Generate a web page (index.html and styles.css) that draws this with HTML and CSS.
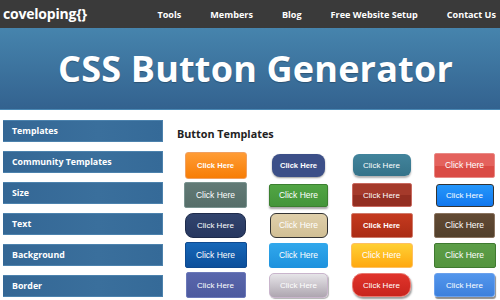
FILE: index.html
```html
<!DOCTYPE html>
<html>
<head>
<meta charset="utf-8">
<link rel="stylesheet" href="styles.css">
</head>
<body>
<nav class="topbar">
  <div class="logo">coveloping{}</div>
  <ul class="menu">
    <li>Tools</li>
    <li>Members</li>
    <li>Blog</li>
    <li>Free Website Setup</li>
    <li>Contact Us</li>
  </ul>
</nav>
<header class="hero">
  <h1>CSS Button Generator</h1>
</header>
<div class="content">
  <aside class="sidebar">
    <div class="side-item">Templates</div>
    <div class="side-item">Community Templates</div>
    <div class="side-item">Size</div>
    <div class="side-item">Text</div>
    <div class="side-item">Background</div>
    <div class="side-item">Border</div>
  </aside>
  <main class="main">
    <h2>Button Templates</h2>
    <div class="grid">
      <div class="cell"><span class="btn b1">Click Here</span></div>
      <div class="cell"><span class="btn b2">Click Here</span></div>
      <div class="cell"><span class="btn b3">Click Here</span></div>
      <div class="cell"><span class="btn b4">Click Here</span></div>
      <div class="cell"><span class="btn b5">Click Here</span></div>
      <div class="cell"><span class="btn b6">Click Here</span></div>
      <div class="cell"><span class="btn b7">Click Here</span></div>
      <div class="cell"><span class="btn b8">Click Here</span></div>
      <div class="cell"><span class="btn b9">Click Here</span></div>
      <div class="cell"><span class="btn b10">Click Here</span></div>
      <div class="cell"><span class="btn b11">Click Here</span></div>
      <div class="cell"><span class="btn b12">Click Here</span></div>
      <div class="cell"><span class="btn b13">Click Here</span></div>
      <div class="cell"><span class="btn b14">Click Here</span></div>
      <div class="cell"><span class="btn b15">Click Here</span></div>
      <div class="cell"><span class="btn b16">Click Here</span></div>
      <div class="cell"><span class="btn b17">Click Here</span></div>
      <div class="cell"><span class="btn b18">Click Here</span></div>
      <div class="cell"><span class="btn b19">Click Here</span></div>
      <div class="cell"><span class="btn b20">Click Here</span></div>
    </div>
  </main>
</div>
</body>
</html>
```
FILE: styles.css
```css
html, body {
  margin: 0;
  padding: 0;
  width: 500px;
  height: 300px;
  overflow: hidden;
  background: #fff;
  font-family: "Open Sans", "DejaVu Sans", sans-serif;
}
.topbar {
  height: 28px;
  background: #3a3a3a;
  display: flex;
  align-items: center;
  color: #fff;
}
.logo {
  font-weight: 700;
  font-size: 14px;
  padding-left: 3px;
  letter-spacing: -0.2px;
  line-height: 28px;
}
.menu {
  list-style: none;
  margin: 0 0 0 auto;
  padding: 0 4px 0 0;
  display: flex;
  gap: 29px;
  font-size: 9.1px;
  font-weight: 700;
}
.hero {
  height: 81px;
  background: linear-gradient(#4684ad, #33628f);
  border-bottom: 1px solid #4a88b4;
  display: flex;
  align-items: center;
  justify-content: center;
}
.hero h1 {
  margin: 0;
  color: #fff;
  font-size: 36px;
  font-weight: 700;
  letter-spacing: 0.2px;
  padding-left: 11px;
  text-shadow: 0 1px 1px rgba(0,0,0,0.25);
}
.content {
  display: flex;
}
.sidebar {
  flex-shrink: 0;
  width: 160px;
  padding: 10px 0 0 3px;
  display: flex;
  flex-direction: column;
  gap: 9px;
}
.side-item {
  height: 20px;
  line-height: 20px;
  background: linear-gradient(90deg, #346795, #3a6f9c 60%, #356a98);
  border: 1px solid #4c82ad;
  border-width: 1px 1px 1px 0;
  color: #fff;
  font-size: 8.8px;
  font-weight: 700;
  padding-left: 9px;
}
.main {
  flex-shrink: 0;
  padding: 16px 0 0 11px;
}
.main h2 {
  margin: 0 0 8px 3px;
  font-size: 10.8px;
  line-height: 16px;
  font-weight: 700;
  color: #222;
}
.grid {
  display: grid;
  grid-template-columns: repeat(4, 83px);
  grid-auto-rows: 30px;
  width: 332px;
}
.cell {
  display: flex;
  align-items: center;
  justify-content: center;
}
.btn {
  box-sizing: border-box;
  display: flex;
  align-items: center;
  justify-content: center;
  font-family: "Liberation Sans", Arial, sans-serif;
  font-size: 8px;
  color: #fff;
}
.b1 { width: 62px; height: 27px; border-radius: 3px; background: linear-gradient(#ff9c35, #f77d05); font-weight: 700; font-size: 7.6px; border: 1px solid #f0a060; }
.b2 { width: 53px; height: 23px; border-radius: 8px; background: #3c4f88; box-shadow: 0 1px 2px rgba(0,0,0,0.4); font-weight: 700; font-size: 7.6px; }
.b3 { width: 58px; height: 22px; border-radius: 6px; background: linear-gradient(#42849c, #357389); box-shadow: 0 2px 2px rgba(0,0,0,0.3); }
.b4 { width: 61px; height: 25px; border-radius: 2px; background: linear-gradient(#e4625d 50%, #da4b45 50%); border: 1px solid #e98a86; font-size: 8.5px; }
.b5 { width: 63px; height: 26px; border-radius: 2px; background: linear-gradient(#627a76, #566e69); border: 1px solid #7a9490; font-size: 8.5px; }
.b6 { width: 59px; height: 23px; border-radius: 2px; background: linear-gradient(#52a544, #43953a); border: 1px solid #3b8030; box-shadow: 0 2px 2px rgba(0,0,0,0.35); font-size: 8.5px; }
.b7 { width: 60px; height: 24px; border-radius: 2px; background: linear-gradient(#a53a2b 50%, #932e21 50%); border: 1px solid #c96a60; }
.b8 { width: 58px; height: 23px; border-radius: 3px; background: linear-gradient(#2597fb, #1177ee); border: 1px solid #333; }
.b9 { width: 61px; height: 25px; border-radius: 8px; background: linear-gradient(#32446d, #263760); border: 1px solid #1f2c4c; }
.b10 { width: 58px; height: 25px; border-radius: 6px; background: linear-gradient(#e0d0ab, #d1bf95); border: 1px solid #333; font-size: 8.5px; }
.b11 { width: 62px; height: 25px; border-radius: 2px; background: linear-gradient(#c53a1f, #ab2c14); border: 1px solid #d07a6a; font-weight: 700; font-size: 7.6px; }
.b12 { width: 61px; height: 25px; border-radius: 2px; background: linear-gradient(#624a33, #52402c); border: 1px solid #8a7460; font-size: 8.5px; }
.b13 { width: 62px; height: 26px; border-radius: 2px; background: linear-gradient(#1667b8, #0c4f9b); border: 1px solid #0e4a90; font-size: 8.5px; }
.b14 { width: 59px; height: 25px; border-radius: 3px; background: linear-gradient(#31a8ec, #1d91dd); font-size: 8.5px; }
.b15 { width: 62px; height: 25px; border-radius: 3px; background: linear-gradient(#ffd034, #ffa80f); border: 1px solid #ffc060; font-size: 8.5px; }
.b16 { width: 62px; height: 25px; border-radius: 2px; background: linear-gradient(#5d9e48, #54943f); border: 1px solid #3f7a30; font-size: 8.5px; }
.b17 { width: 60px; height: 26px; border-radius: 2px; background: linear-gradient(#5966ac, #4d5a9f); border: 1px solid #6b78b8; }
.b18 { width: 59px; height: 25px; border-radius: 5px; background: linear-gradient(#e6e4e8, #aea6b0); border: 1px solid #c9b5cc; box-shadow: 1px 1px 1px rgba(0,0,0,0.3); }
.b19 { width: 59px; height: 24px; border-radius: 10px; background: linear-gradient(#e0342b, #c8241d); box-shadow: 1px 2px 2px rgba(0,0,0,0.4); border: 1px solid #e97870; }
.b20 { width: 61px; height: 24px; border-radius: 3px; background: linear-gradient(#5396ec, #3c80dd); box-shadow: 1px 2px 1px rgba(0,0,0,0.45); border: 1px solid #6aa0ec; }
```
